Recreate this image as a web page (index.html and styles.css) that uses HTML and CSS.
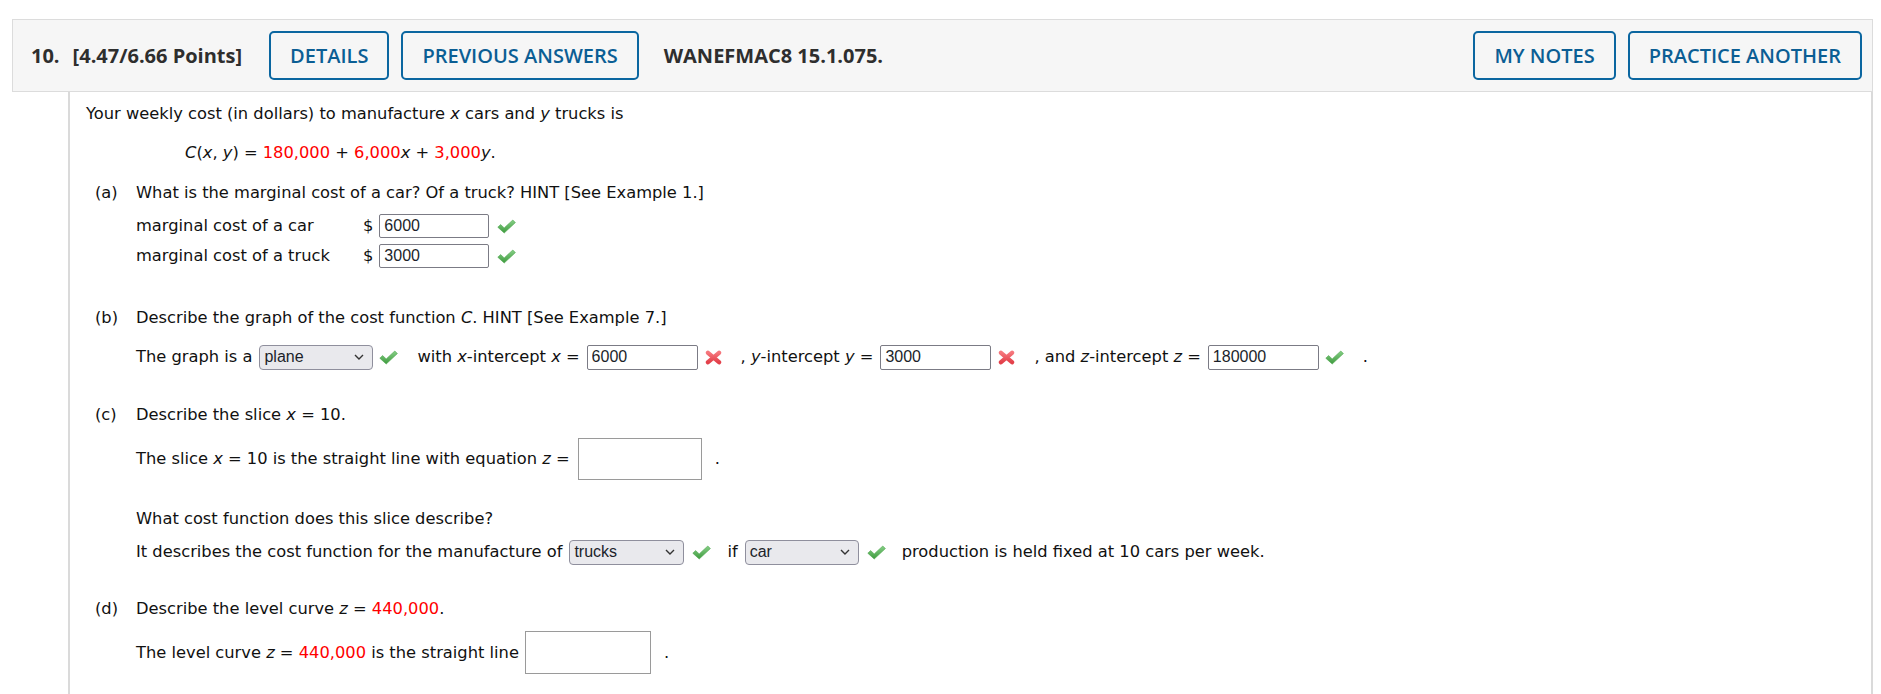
FILE: index.html
```html
<!DOCTYPE html>
<html lang="en">
<head>
<meta charset="utf-8">
<title>Question 10</title>
<link rel="stylesheet" href="styles.css">
</head>
<body>
<svg class="defs" width="0" height="0" aria-hidden="true">
  <defs>
    <linearGradient id="okgrad" x1="0" y1="0" x2="0" y2="1">
      <stop offset="0" stop-color="#86cf86"/>
      <stop offset="1" stop-color="#3f9b3f"/>
    </linearGradient>
    <linearGradient id="badgrad" x1="0" y1="0" x2="0" y2="1">
      <stop offset="0" stop-color="#f5767c"/>
      <stop offset="1" stop-color="#e3404a"/>
    </linearGradient>
  </defs>
</svg>
<div class="page">
  <div class="qhead">
    <span class="qnum">10.</span><span class="qpts">[4.47/6.66 Points]</span>
    <span class="btn btn-first">DETAILS</span>
    <span class="btn">PREVIOUS ANSWERS</span>
    <span class="qcode">WANEFMAC8 15.1.075.</span>
    <span class="btn btn-notes">MY NOTES</span>
    <span class="btn">PRACTICE ANOTHER</span>
  </div>

  <div class="qbody">
    <p class="intro">Your weekly cost (in dollars) to manufacture <i>x</i> cars and <i>y</i> trucks is</p>
    <p class="formula"><i>C</i>(<i>x</i>, <i>y</i>) = <span class="red">180,000</span> + <span class="red">6,000</span><i>x</i> + <span class="red">3,000</span><i>y</i>.</p>

    <div class="part part-a">
      <span class="plabel">(a)</span>
      <div class="pbody">
        <p class="qtext">What is the marginal cost of a car? Of a truck? HINT [See Example 1.]</p>
        <div class="row row-a1">
          <span class="mlabel">marginal cost of a car</span><span class="dollar">$</span><input class="inp inp-money" type="text" value="6000" readonly>
          <svg class="ok ok-money" viewBox="0 0 19 15" width="19" height="15"><path d="M0.8,8.2 L3.6,5.6 L7.2,8.9 L15.8,1 L18.4,3.6 L7.2,14 Z" fill="url(#okgrad)" stroke="#4ea64e" stroke-width="0.6" stroke-linejoin="round"/></svg>
        </div>
        <div class="row">
          <span class="mlabel">marginal cost of a truck</span><span class="dollar">$</span><input class="inp inp-money" type="text" value="3000" readonly>
          <svg class="ok ok-money" viewBox="0 0 19 15" width="19" height="15"><path d="M0.8,8.2 L3.6,5.6 L7.2,8.9 L15.8,1 L18.4,3.6 L7.2,14 Z" fill="url(#okgrad)" stroke="#4ea64e" stroke-width="0.6" stroke-linejoin="round"/></svg>
        </div>
      </div>
    </div>

    <div class="part part-b">
      <span class="plabel">(b)</span>
      <div class="pbody">
        <p class="qtext">Describe the graph of the cost function <i>C</i>. HINT [See Example 7.]</p>
        <div class="row row-b1">
          <span>The graph is a</span>
          <span class="sel sel-plane"><span class="sel-text">plane</span><svg class="chev" viewBox="0 0 10 6" width="10" height="6"><polyline points="1,1 5,5 9,1" fill="none" stroke="#333" stroke-width="1.4"/></svg></span>
          <svg class="ok" viewBox="0 0 19 15" width="19" height="15"><path d="M0.8,8.2 L3.6,5.6 L7.2,8.9 L15.8,1 L18.4,3.6 L7.2,14 Z" fill="url(#okgrad)" stroke="#4ea64e" stroke-width="0.6" stroke-linejoin="round"/></svg>
          <span class="after">with <i>x</i>-intercept <i>x</i> =</span>
          <input class="inp inp-icpt" type="text" value="6000" readonly>
          <svg class="bad" viewBox="0 0 17 15" width="17" height="15"><path d="M3,2.8 L14,12.2 M14,2.8 L3,12.2" fill="none" stroke="url(#badgrad)" stroke-width="4.4" stroke-linecap="round"/></svg>
          <span class="after">, <i>y</i>-intercept <i>y</i> =</span>
          <input class="inp inp-icpt" type="text" value="3000" readonly>
          <svg class="bad" viewBox="0 0 17 15" width="17" height="15"><path d="M3,2.8 L14,12.2 M14,2.8 L3,12.2" fill="none" stroke="url(#badgrad)" stroke-width="4.4" stroke-linecap="round"/></svg>
          <span class="after">, and <i>z</i>-intercept <i>z</i> =</span>
          <input class="inp inp-icpt" type="text" value="180000" readonly>
          <svg class="ok" viewBox="0 0 19 15" width="19" height="15"><path d="M0.8,8.2 L3.6,5.6 L7.2,8.9 L15.8,1 L18.4,3.6 L7.2,14 Z" fill="url(#okgrad)" stroke="#4ea64e" stroke-width="0.6" stroke-linejoin="round"/></svg>
          <span class="after">.</span>
        </div>
      </div>
    </div>

    <div class="part part-c">
      <span class="plabel">(c)</span>
      <div class="pbody">
        <p class="qtext">Describe the slice <i>x</i> = 10.</p>
        <div class="row row-box row-c1">
          <span>The slice <i>x</i> = 10 is the straight line with equation <i>z</i> =</span>
          <span class="ansbox ansbox-c"></span>
          <span class="dot">.</span>
        </div>
        <p class="qtext qtext-c2">What cost function does this slice describe?</p>
        <div class="row row-c3">
          <span>It describes the cost function for the manufacture of</span>
          <span class="sel sel-trucks"><span class="sel-text">trucks</span><svg class="chev" viewBox="0 0 10 6" width="10" height="6"><polyline points="1,1 5,5 9,1" fill="none" stroke="#333" stroke-width="1.4"/></svg></span>
          <svg class="ok ok-sel" viewBox="0 0 19 15" width="19" height="15"><path d="M0.8,8.2 L3.6,5.6 L7.2,8.9 L15.8,1 L18.4,3.6 L7.2,14 Z" fill="url(#okgrad)" stroke="#4ea64e" stroke-width="0.6" stroke-linejoin="round"/></svg>
          <span class="after-if">if</span>
          <span class="sel sel-car"><span class="sel-text">car</span><svg class="chev" viewBox="0 0 10 6" width="10" height="6"><polyline points="1,1 5,5 9,1" fill="none" stroke="#333" stroke-width="1.4"/></svg></span>
          <svg class="ok ok-sel" viewBox="0 0 19 15" width="19" height="15"><path d="M0.8,8.2 L3.6,5.6 L7.2,8.9 L15.8,1 L18.4,3.6 L7.2,14 Z" fill="url(#okgrad)" stroke="#4ea64e" stroke-width="0.6" stroke-linejoin="round"/></svg>
          <span class="after-if">production is held fixed at 10 cars per week.</span>
        </div>
      </div>
    </div>

    <div class="part part-d">
      <span class="plabel">(d)</span>
      <div class="pbody">
        <p class="qtext">Describe the level curve <i>z</i> = <span class="red">440,000</span>.</p>
        <div class="row row-box row-d1">
          <span>The level curve <i>z</i> = <span class="red">440,000</span> is the straight line</span>
          <span class="ansbox ansbox-d"></span>
          <span class="dot">.</span>
        </div>
      </div>
    </div>
  </div>
</div>
</body>
</html>
```

FILE: styles.css
```css
html, body {
  margin: 0;
  background: #ffffff;
}

body {
  font-family: "DejaVu Sans", Verdana, sans-serif;
  color: #111111;
}

.defs {
  position: absolute;
  width: 0;
  height: 0;
  overflow: hidden;
}

.page {
  padding: 19px 8px 0 12px;
}

/* ---------- header bar ---------- */
.qhead {
  display: flex;
  align-items: center;
  box-sizing: border-box;
  height: 73px;
  border: 1px solid #dcdcdc;
  background: #f6f6f6;
  padding: 0 10px 0 18px;
  font-family: "Open Sans", "Liberation Sans", sans-serif;
  font-size: 20px;
  color: #2e2e2e;
}

.qnum {
  font-weight: 700;
  margin-right: 13px;
}

.qpts {
  font-weight: 700;
}

.btn {
  display: flex;
  align-items: center;
  box-sizing: border-box;
  height: 49px;
  padding: 0 19px;
  margin-left: 12px;
  border: 2px solid #0b66a0;
  border-radius: 5px;
  color: #0b5e94;
  font-weight: 600;
  white-space: nowrap;
}

.btn-first {
  margin-left: 27px;
}

.btn-notes {
  margin-left: auto;
}

.qcode {
  font-weight: 700;
  margin-left: 25px;
}

/* ---------- question body ---------- */
.qbody {
  margin-left: 56px;
  border-left: 2px solid #dadada;
  border-right: 2px solid #dadada;
  padding: 12px 0 40px 16px;
  font-size: 16.3px;
  line-height: 20px;
}

.qbody p {
  margin: 0;
}

.qbody i {
  font-style: italic;
}

.red {
  color: #ff0000;
}

.formula {
  margin: 19px 0 0 99px !important;
}

.part {
  display: grid;
  grid-template-columns: 41px 1fr;
  margin-left: 9px;
}

.part-a { margin-top: 20px; }
.part-b { margin-top: 37px; }
.part-c { margin-top: 33px; }
.part-d { margin-top: 32px; }

.row {
  display: flex;
  align-items: center;
  height: 30px;
  white-space: nowrap;
}

.row-a1 { margin-top: 8px; }
.row-b1 { margin-top: 14px; }
.row-c1 { margin-top: 13px; height: 42px; }
.row-c3 { margin-top: 8px; }
.row-d1 { margin-top: 12px; height: 43px; }

.qtext-c2 {
  margin-top: 29px !important;
}

.mlabel {
  width: 227px;
}

.dollar {
  margin-right: 6px;
}

/* text inputs */
.inp {
  box-sizing: border-box;
  height: 24px;
  margin: 0;
  padding: 0 4px;
  border: 1px solid #7b7b85;
  border-radius: 2px;
  background: #ffffff;
  font-family: "Liberation Sans", Arial, sans-serif;
  font-size: 16px;
  color: #1b1f2a;
  outline: none;
}

.inp-money {
  width: 110px;
  height: 24px;
}

.inp-icpt {
  width: 111px;
  height: 25px;
  margin-left: 7px;
}

/* fake selects */
.sel {
  display: flex;
  align-items: center;
  justify-content: space-between;
  box-sizing: border-box;
  height: 25px;
  padding: 0 8px 0 4px;
  border: 1px solid #8f8f9d;
  border-radius: 4px;
  background: #e9e9ed;
  font-family: "Liberation Sans", Arial, sans-serif;
  font-size: 16px;
  color: #1b1f2a;
}

.sel-plane {
  width: 114px;
  margin-left: 7px;
}

.sel-trucks {
  width: 115px;
  margin-left: 7px;
}

.sel-car {
  width: 114px;
  margin-left: 7px;
}

.chev {
  display: block;
}

/* status icons */
.ok, .bad {
  flex: none;
  display: block;
}

.ok {
  margin-left: 6px;
}

.ok-money {
  margin-left: 8px;
}

.ok-sel {
  margin-left: 8px;
}

.bad {
  margin-left: 7px;
}

.after {
  margin-left: 19px;
}

.after-if {
  margin-left: 16px;
}

/* empty answer boxes */
.ansbox {
  display: block;
  box-sizing: border-box;
  border: 1px solid #9a9a9a;
  background: #ffffff;
}

.ansbox-c {
  width: 124px;
  height: 42px;
  margin-left: 8px;
}

.ansbox-d {
  width: 126px;
  height: 43px;
  margin-left: 6px;
}

.dot {
  margin-left: 13px;
}
```
